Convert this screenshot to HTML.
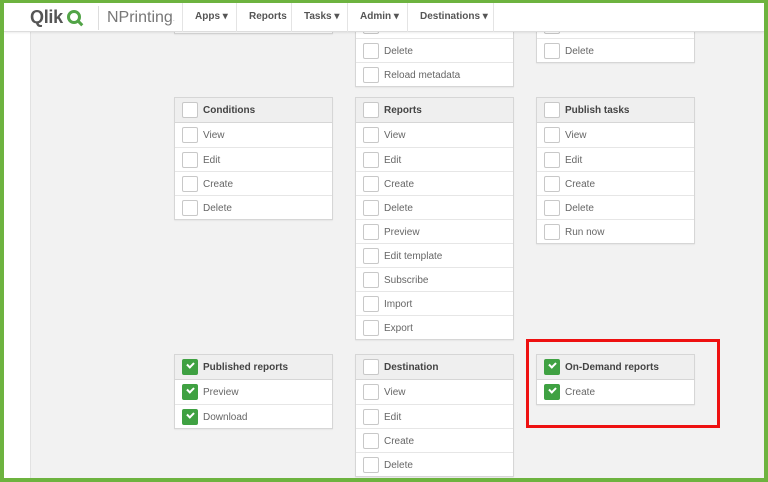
<!DOCTYPE html>
<html><head><meta charset="utf-8"><style>
*{box-sizing:border-box;margin:0;padding:0}
body{width:768px;height:482px;overflow:hidden;background:#6db33f;font-family:"Liberation Sans",sans-serif;position:relative}
.frame{position:absolute;left:4px;top:3px;width:760px;height:475px;background:#f2f2f2;overflow:hidden}
.lstrip{position:absolute;left:0;top:0;width:27px;height:475px;background:#fff;border-right:1px solid #e2e2e2}
.hdr{position:absolute;left:0;top:0;width:760px;height:29px;background:#fff;border-bottom:1px solid #ddd;box-shadow:0 1px 2px rgba(0,0,0,.08);z-index:5}
.logo{position:absolute;left:26px;top:4px;font-size:18px;font-weight:bold;color:#555;letter-spacing:-0.3px}
.q{display:inline-block;width:14px;height:14px;border:3px solid #52a447;border-radius:50%;vertical-align:-1px;margin-left:4px;position:relative}
.q:after{content:"";position:absolute;right:-5px;bottom:-4px;width:5px;height:3px;background:#52a447;transform:rotate(45deg)}
.np{position:absolute;left:94px;top:3px;height:24px;border-left:1px solid #ddd;padding-left:8px;font-size:16px;color:#777;line-height:24px}
.nav{position:absolute;top:0;height:29px;border-left:1px solid #e4e4e4;font-size:10px;font-weight:bold;color:#555;line-height:28px;padding-left:12px}
.card{position:absolute;width:159px;background:#fff;border:1px solid #d6d6d6;box-shadow:0 1px 1px rgba(0,0,0,.05)}
.row{height:24px;border-top:1px solid #e6e6e6;font-size:10px;color:#666;line-height:25px;padding-left:28px;position:relative}
.row:first-child{border-top:none}
.h{background:#efefef;font-weight:bold;color:#444;border-bottom:1px solid #d6d6d6;height:25px;line-height:26px}
.h+.row{border-top:none}
.row:before{content:"";position:absolute;left:7px;top:4px;width:14px;height:14px;border:1px solid #c8c8c8;border-radius:2px;background:#fff}
.c:before{background:#3fa142;border-color:#3fa142}
.c:after{content:"";position:absolute;left:12px;top:7px;width:5px;height:3px;border-left:2px solid #fff;border-bottom:2px solid #fff;transform:rotate(-45deg)}
.red{position:absolute;left:522px;top:336px;width:194px;height:89px;border:3px solid #ee1111}
</style></head><body>
<div class="frame">
<div class="lstrip"></div>
<div class="hdr">
<div class="logo">Qlik<span class="q"></span></div>
<div class="np">NPrinting<span style="font-size:6px">·</span></div>
<div class="nav" style="left:178px;width:54px">Apps ▾</div>
<div class="nav" style="left:232px;width:55px">Reports</div>
<div class="nav" style="left:287px;width:56px">Tasks ▾</div>
<div class="nav" style="left:343px;width:60px">Admin ▾</div>
<div class="nav" style="left:403px;width:86px">Destinations ▾</div>
<div class="nav" style="left:489px;width:10px"></div>
</div>

<div class="card" style="left:170px;top:10px;height:21px"></div>
<div class="card" style="left:351px;top:10px"><div class="row" style="height:24px"></div><div class="row">Delete</div><div class="row">Reload metadata</div></div>
<div class="card" style="left:532px;top:10px"><div class="row"></div><div class="row">Delete</div></div>

<div class="card" style="left:170px;top:94px"><div class="row h">Conditions</div><div class="row">View</div><div class="row">Edit</div><div class="row">Create</div><div class="row">Delete</div></div>
<div class="card" style="left:351px;top:94px"><div class="row h">Reports</div><div class="row">View</div><div class="row">Edit</div><div class="row">Create</div><div class="row">Delete</div><div class="row">Preview</div><div class="row">Edit template</div><div class="row">Subscribe</div><div class="row">Import</div><div class="row">Export</div></div>
<div class="card" style="left:532px;top:94px"><div class="row h">Publish tasks</div><div class="row">View</div><div class="row">Edit</div><div class="row">Create</div><div class="row">Delete</div><div class="row">Run now</div></div>

<div class="card" style="left:170px;top:351px"><div class="row h c">Published reports</div><div class="row c">Preview</div><div class="row c">Download</div></div>
<div class="card" style="left:351px;top:351px"><div class="row h">Destination</div><div class="row">View</div><div class="row">Edit</div><div class="row">Create</div><div class="row">Delete</div></div>
<div class="card" style="left:532px;top:351px"><div class="row h c">On-Demand reports</div><div class="row c">Create</div></div>
<div class="red"></div>
</div>
</body></html>
